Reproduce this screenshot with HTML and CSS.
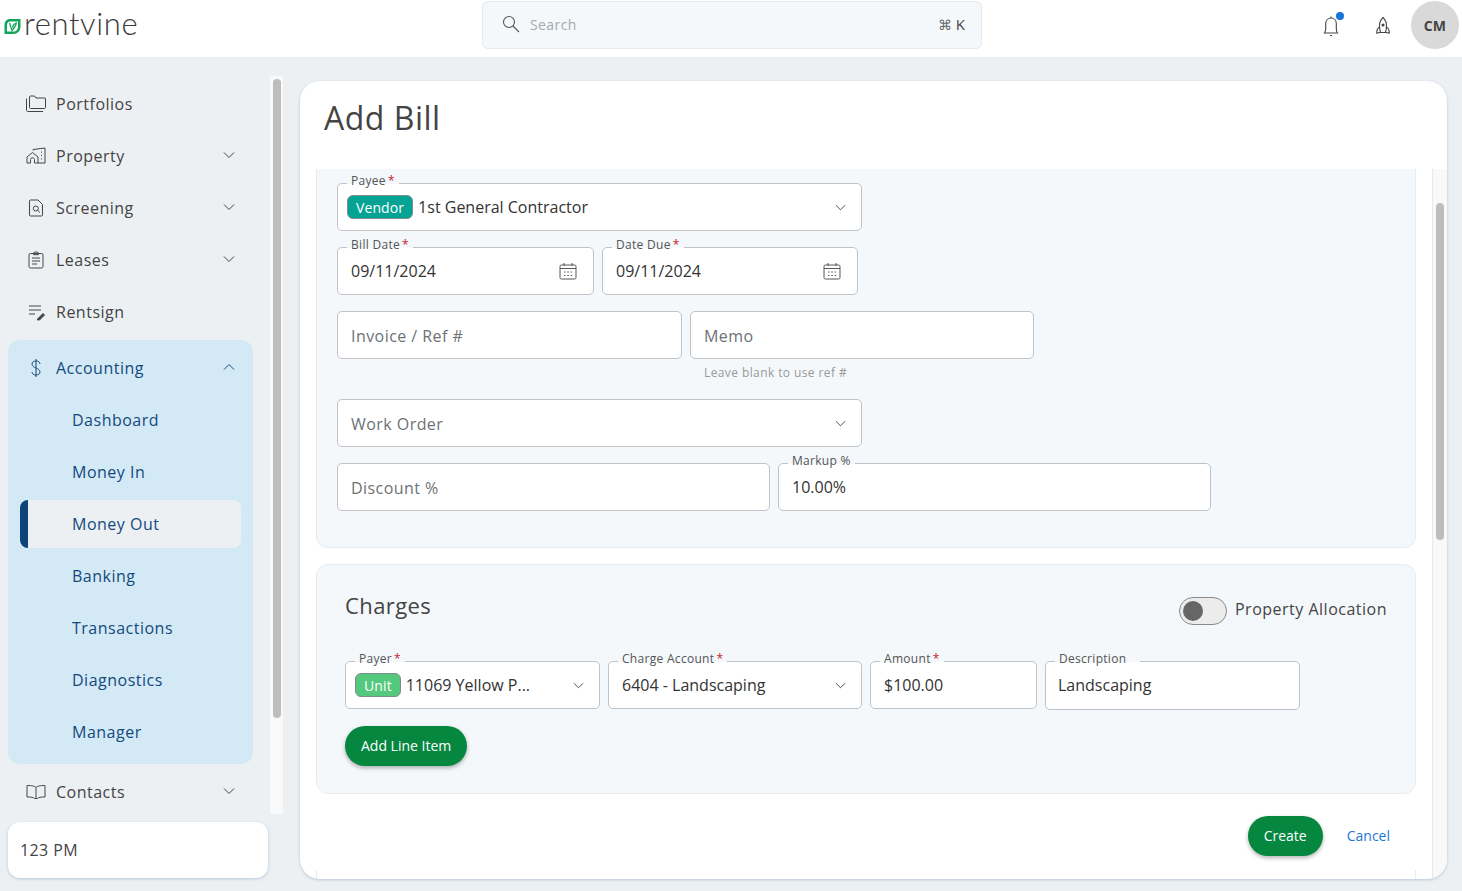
FILE: index.html
```html
<!DOCTYPE html>
<html lang="en">
<head>
  <meta charset="UTF-8" />
  <meta name="viewport" content="width=device-width, initial-scale=1.0"/>
  <title>Add Bill</title>
  <link rel="stylesheet" href="styles.css">
</head>
<body>
  <header class="topbar">
    <div class="logo">
      <svg class="logo-mark" viewBox="0 0 17 17" width="17" height="17">
        <path d="M6 1h10.500v7.500c0 4.500-3 7.500-7.500 7.500H.5V7C.5 3.500 2.500 1 6 1z" fill="#12a65c"/>
        <path d="M6.500 3.500h7.500v5c0 3-2 5-4.500 5H3V7.200c0-2.200 1.300-3.700 3.500-3.700z" fill="#fff"/>
        <path d="M5.500 5l2.500 7.500c2-2 4-4.500 4.300-7.500-2 .6-3.300 2-3.800 4.500" fill="none" stroke="#12a65c" stroke-width="1.300"/>
      </svg>
      <span class="logo-text">rentvine</span>
    </div>
    <div class="search">
      <svg class="search-icon" viewBox="0 0 18 18" width="18" height="18" fill="none" stroke="#555" stroke-width="1.100">
        <circle cx="7" cy="7" r="5.500"/><path d="M11 11l6 6"/>
      </svg>
      <span class="search-text">Search</span>
      <span class="search-key"><span class="cmd">⌘</span> K</span>
    </div>
    <div class="top-actions">
      <div class="bell">
        <svg viewBox="0 0 24 24" width="24" height="24" fill="none" stroke="#444" stroke-width="1.100">
          <path d="M5.500 19c1-1.200 1.200-2.500 1.200-4.500V9.500c0-3.200 2.300-5.500 5.300-5.500s5.300 2.300 5.300 5.500v5c0 2 .2 3.300 1.200 4.500z"/>
          <path d="M12 2.500V4M11 21.500h2"/>
        </svg>
        <span class="bell-dot"></span>
      </div>
      <svg class="rocket" viewBox="0 0 24 24" width="24" height="24" fill="none" stroke="#444" stroke-width="1.100">
        <path d="M12 3.500c2.500 2.500 3.500 5 3.500 8 0 2.500-.5 5-1 7h-5c-.5-2-1-4.500-1-7 0-3 1-5.500 3.500-8z"/>
        <path d="M8.700 13c-2 1-3 2.500-3 6l3.500-.5M15.300 13c2 1 3 2.500 3 6l-3.500-.5"/>
        <circle cx="12" cy="11" r="1" fill="#444"/>
      </svg>
      <div class="avatar">CM</div>
    </div>
  </header>

  <div class="layout">
    <aside class="sidebar">
      <div class="side-scroll">
        <nav class="nav">
          <a class="nav-item">
            <svg class="nav-icon" viewBox="0 0 20 20" width="20" height="20"><path d="M3.500 13.500V3c0-.6.400-1 1-1h4l1.500 2h9c.6 0 .5.400.5 1v8.500c0 .6-.4 1-1 1H4.500c-.6 0-1-.4-1-1z"/><path d="M.5 4.500v11.500c0 1 .5 1.500 1.500 1.500h15"/></svg>
            <span>Portfolios</span>
          </a>
          <a class="nav-item">
            <svg class="nav-icon" viewBox="0 0 20 20" width="20" height="20"><path d="M1 17v-6l5.500-4.500L12 11v6H8.500v-3.500c0-1-.8-1.800-2-1.800s-2 .8-2 1.800V17z"/><path d="M7 4.500V3.500l12-1.500v15h-7"/><path d="M15 6h1M15 9.500h1M15 13h1"/></svg>
            <span>Property</span>
            <svg class="chevron" viewBox="0 0 12 12" width="12" height="12"><path d="M1 3.500l5 5 5-5"/></svg>
          </a>
          <a class="nav-item">
            <svg class="nav-icon" viewBox="0 0 20 20" width="20" height="20"><path d="M3.500 17V3c0-.6.400-1 1-1h7.500l4.500 4.500V17c0 .6-.4 1-1 1h-11c-.6 0-1-.4-1-1z"/><circle cx="9.800" cy="10.500" r="2.500"/><path d="M11.700 12.300l2.300 2.300"/></svg>
            <span>Screening</span>
            <svg class="chevron" viewBox="0 0 12 12" width="12" height="12"><path d="M1 3.500l5 5 5-5"/></svg>
          </a>
          <a class="nav-item">
            <svg class="nav-icon" viewBox="0 0 20 20" width="20" height="20"><rect x="3" y="3.500" width="14" height="14.500" rx="1.500"/><path d="M7.500 3.500c0-1 .8-1.500 2.500-1.500s2.500.5 2.500 1.500v1.200h-5zM6 8h8M6 11h8M6 14h5"/></svg>
            <span>Leases</span>
            <svg class="chevron" viewBox="0 0 12 12" width="12" height="12"><path d="M1 3.500l5 5 5-5"/></svg>
          </a>
          <a class="nav-item">
            <svg class="nav-icon" viewBox="0 0 20 20" width="20" height="20"><path d="M3 4h12M3 8h12M3 12h6"/><path d="M12 16.500l5-5 1.500 1.500-5 5h-2z" fill="#444"/></svg>
            <span>Rentsign</span>
          </a>

          <div class="nav-group">
            <a class="nav-item">
              <svg class="nav-icon" viewBox="0 0 20 20" width="20" height="20"><path d="M14 6c0-1.800-1.600-3-4-3S6 4.200 6 6c0 4.500 8 3.500 8 8 0 1.800-1.600 3-4 3s-4-1.200-4-3M10 1v18"/></svg>
              <span>Accounting</span>
              <svg class="chevron" viewBox="0 0 12 12" width="12" height="12"><path d="M1 8.500l5-5 5 5"/></svg>
            </a>
            <a class="sub-item">Dashboard</a>
            <a class="sub-item">Money In</a>
            <a class="sub-item active">Money Out</a>
            <a class="sub-item">Banking</a>
            <a class="sub-item">Transactions</a>
            <a class="sub-item">Diagnostics</a>
            <a class="sub-item">Manager</a>
          </div>

          <a class="nav-item">
            <svg class="nav-icon" viewBox="0 0 20 20" width="20" height="20"><path d="M10 5.500C8.500 4 6 3.500 1 3.500v11.500c4 0 6.500.2 7.500 1.500h3c1-1.300 3.500-1.500 7.500-1.500V3.500c-5 0-7.500.5-9 2zM10 5.500v11"/></svg>
            <span>Contacts</span>
            <svg class="chevron" viewBox="0 0 12 12" width="12" height="12"><path d="M1 3.500l5 5 5-5"/></svg>
          </a>
        </nav>
        <div class="side-track"><div class="side-thumb"></div></div>
      </div>
      <div class="pm-card">123 PM</div>
    </aside>

    <main class="card">
      <h1 class="card-title">Add Bill</h1>
      <div class="card-body">
        <div class="content">
          <section class="panel panel-top">
            <div class="row">
              <div class="field w525">
                <label>Payee<i>*</i></label>
                <span class="pill vendor">Vendor</span>
                <span class="value">1st General Contractor</span>
                <svg class="chevron" viewBox="0 0 12 12" width="12" height="12"><path d="M1 3.500l5 5 5-5"/></svg>
              </div>
            </div>
            <div class="row">
              <div class="field date w257">
                <label>Bill Date<i>*</i></label>
                <span class="value">09/11/2024</span>
                <svg class="cal" viewBox="0 0 18 18" width="18" height="18"><rect x="1" y="3" width="16" height="14" rx="1.500"/><path d="M1 6.500h16M5 1v3M13 1v3"/><path class="dots" d="M5 10h1.500M8.300 10h1.500M11.600 10h1.500M5 13.500h1.500M8.300 13.500h1.500M11.600 13.500h1.500"/></svg>
              </div>
              <div class="field date w256">
                <label>Date Due<i>*</i></label>
                <span class="value">09/11/2024</span>
                <svg class="cal" viewBox="0 0 18 18" width="18" height="18"><rect x="1" y="3" width="16" height="14" rx="1.500"/><path d="M1 6.500h16M5 1v3M13 1v3"/><path class="dots" d="M5 10h1.500M8.300 10h1.500M11.600 10h1.500M5 13.500h1.500M8.300 13.500h1.500M11.600 13.500h1.500"/></svg>
              </div>
            </div>
            <div class="row">
              <div class="w345">
                <div class="field"><span class="placeholder">Invoice / Ref #</span></div>
              </div>
              <div class="w344">
                <div class="field"><span class="placeholder">Memo</span></div>
                <div class="helper">Leave blank to use ref #</div>
              </div>
            </div>
            <div class="row">
              <div class="field w525">
                <span class="placeholder">Work Order</span>
                <svg class="chevron" viewBox="0 0 12 12" width="12" height="12"><path d="M1 3.500l5 5 5-5"/></svg>
              </div>
            </div>
            <div class="row">
              <div class="field w433"><span class="placeholder">Discount %</span></div>
              <div class="field w433">
                <label>Markup %</label>
                <span class="value">10.00%</span>
              </div>
            </div>
          </section>

          <section class="panel charges">
            <div class="charges-head">
              <h2>Charges</h2>
              <div class="allocation">
                <span class="toggle"><span class="knob"></span></span>
                <span class="allocation-text">Property Allocation</span>
              </div>
            </div>
            <div class="row charge-row">
              <div class="field w255">
                <label>Payer<i>*</i></label>
                <span class="pill unit">Unit</span>
                <span class="value">11069 Yellow P...</span>
                <svg class="chevron" viewBox="0 0 12 12" width="12" height="12"><path d="M1 3.500l5 5 5-5"/></svg>
              </div>
              <div class="field w254">
                <label>Charge Account<i>*</i></label>
                <span class="value">6404 - Landscaping</span>
                <svg class="chevron" viewBox="0 0 12 12" width="12" height="12"><path d="M1 3.500l5 5 5-5"/></svg>
              </div>
              <div class="field w167">
                <label>Amount<i>*</i></label>
                <span class="value">$100.00</span>
              </div>
              <div class="field w255 desc">
                <label>Description</label>
                <span class="value">Landscaping</span>
              </div>
            </div>
            <button class="btn">Add Line Item</button>
          </section>

          <div class="actions">
            <button class="btn">Create</button>
            <a class="cancel">Cancel</a>
          </div>
          <div class="next-panel"></div>
        </div>
        <div class="main-track"><div class="main-thumb"></div></div>
      </div>
    </main>
  </div>
</body>
</html>
```

FILE: styles.css
```css
* {
  box-sizing: border-box;
}
body {
  margin: 0;
  height: 891px;
  overflow: hidden;
  background-color: #ecf0f3;
  font-family: "Open Sans", Arial, sans-serif;
  color: #333;
}

/* top bar */
.topbar {
  display: flex;
  align-items: center;
  height: 57px;
  padding: 0 3px 7px 4px;
  background: #fff;
}
.logo {
  display: flex;
  align-items: center;
  width: 478px;
  padding-bottom: 4px;
}
.logo-mark {
  flex: none;
  margin-top: 6px;
  margin-right: 3px;
}
.logo-text {
  font-family: Lato, Arial, sans-serif;
  font-weight: 300;
  font-size: 31px;
  line-height: 30px;
  letter-spacing: 0.6px;
  color: #3a3a3a;
}
.search {
  display: flex;
  align-items: center;
  width: 500px;
  height: 48px;
  padding: 0 16px 2px 19px;
  background: #f4f8fb;
  border: 1px solid #e6eaee;
  border-radius: 6px;
}
.search-icon {
  margin-right: 10px;
}
.search-text {
  font-size: 14px;
  letter-spacing: 0.4px;
  color: #a6aaae;
}
.search-key {
  margin-left: auto;
  font-size: 15px;
  color: #444;
}
.cmd {
  font-family: "DejaVu Sans", sans-serif;
  font-size: 14px;
  font-weight: 300;
  color: #666;
}
.top-actions {
  display: flex;
  align-items: center;
  margin-left: auto;
}
.bell {
  position: relative;
  width: 24px;
  height: 24px;
  margin-right: 28px;
  margin-top: 2px;
}
.bell-dot {
  position: absolute;
  top: -2px;
  right: -1px;
  width: 8px;
  height: 8px;
  border-radius: 50%;
  background: #1a73d8;
}
.rocket {
  margin-right: 16px;
  margin-top: 2px;
}
.avatar {
  display: flex;
  align-items: center;
  justify-content: center;
  width: 48px;
  height: 48px;
  border-radius: 50%;
  background: #d9d9d9;
  font-size: 14px;
  font-weight: 700;
  letter-spacing: 0.3px;
  color: #444;
}

.layout {
  display: flex;
  height: 834px;
}

/* sidebar */
.sidebar {
  flex: none;
  width: 300px;
  padding-top: 19px;
}
.side-scroll {
  display: flex;
  height: 738px;
  overflow: hidden;
}
.nav {
  flex: none;
  width: 245px;
  margin: 0 17px 0 8px;
  padding-top: 2px;
}
.nav-item {
  display: flex;
  align-items: center;
  height: 52px;
  padding: 0 18px;
  font-size: 16px;
  letter-spacing: 0.5px;
  color: #444;
}
.nav-icon {
  flex: none;
  width: 20px;
  height: 20px;
  margin-right: 10px;
  fill: none;
  stroke: #444;
  stroke-width: 1;
}
.chevron {
  flex: none;
  margin-left: auto;
  fill: none;
  stroke: #444;
  stroke-width: 1;
}
.nav-item .chevron {
  margin-top: -2px;
}
.nav-group {
  margin: 2px 0;
  padding: 2px 0 6px;
  background: #d3e9f6;
  border-radius: 12px;
}
.nav-group .nav-item {
  color: #134a7c;
}
.nav-group .nav-icon,
.nav-group .chevron {
  stroke: #134a7c;
}
.sub-item {
  display: flex;
  align-items: center;
  height: 52px;
  padding-left: 64px;
  font-size: 16px;
  letter-spacing: 0.5px;
  color: #134a7c;
}
.sub-item.active {
  height: 48px;
  margin: 2px 12px;
  padding-left: 44px;
  background: #ecf0f3;
  border-left: 8px solid #0c4478;
  border-radius: 8px;
}
.side-track {
  flex: none;
  width: 13px;
  padding: 3px 2px 0 3px;
  background: #f9f9f9;
}
.side-thumb {
  height: 639px;
  border-radius: 4px;
  background: #bdbdbd;
}
.pm-card {
  display: flex;
  align-items: center;
  width: 260px;
  height: 56px;
  margin: 8px 0 0 8px;
  padding-left: 12px;
  background: #fff;
  border-radius: 12px;
  box-shadow: 0 1px 3px rgba(110, 140, 175, 0.4);
  font-size: 16px;
  letter-spacing: 0.4px;
  color: #444;
}

/* main card */
.card {
  width: 1147px;
  height: 798px;
  margin-top: 24px;
  background: #fff;
  border-radius: 20px;
  box-shadow: 0 1px 3px rgba(110, 140, 175, 0.4);
  overflow: hidden;
}
.card-title {
  height: 88px;
  margin: 0;
  padding: 13px 0 0 24px;
  font-size: 32px;
  font-weight: 400;
  line-height: 48px;
  letter-spacing: 0.5px;
  color: #444;
}
.card-body {
  display: flex;
  height: 710px;
}
.content {
  flex: none;
  width: 1132px;
  padding: 0 16px;
}
.main-track {
  flex: none;
  width: 15px;
  padding: 34px 3px 0 3px;
  background: #f9f9f9;
  border-left: 1px solid #e6e9ec;
}
.main-thumb {
  height: 337px;
  border-radius: 4px;
  background: #bdbdbd;
}

.panel {
  background: #f4f8fb;
  border: 1px solid #e8ecef;
}
.panel-top {
  height: 379px;
  padding: 14px 20px 0;
  border-top: none;
  border-radius: 0 0 12px 12px;
}
.charges {
  height: 230px;
  margin-top: 16px;
  padding: 27px 28px 0;
  border-radius: 12px;
}
.charges-head {
  display: flex;
  align-items: flex-start;
  justify-content: space-between;
  height: 69px;
}
.charges-head h2 {
  margin: -1px 0 0;
  font-size: 22px;
  font-weight: 400;
  line-height: 28px;
  letter-spacing: 0.4px;
  color: #444;
}
.allocation {
  display: flex;
  align-items: center;
  gap: 8px;
  padding-top: 5px;
  font-size: 16px;
  letter-spacing: 0.5px;
  color: #444;
}
.allocation-text {
  margin-top: -5px;
}
.toggle {
  display: flex;
  align-items: center;
  width: 48px;
  height: 28px;
  padding-left: 3px;
  background: #ececec;
  border: 1px solid #8a8a8a;
  border-radius: 14px;
}
.knob {
  width: 20px;
  height: 20px;
  border-radius: 50%;
  background: #666;
}

/* form fields */
.row {
  display: flex;
  gap: 8px;
  margin-bottom: 16px;
}
.field {
  position: relative;
  display: flex;
  align-items: center;
  height: 48px;
  padding: 0 13px;
  background: #fff;
  border: 1px solid #bfc3c7;
  border-radius: 5px;
  font-size: 16px;
}
.field label {
  position: absolute;
  top: -11px;
  left: 9px;
  padding: 0 4px;
  background: linear-gradient(#f4f8fb 68%, #fff 68%);
  font-size: 12px;
  line-height: 16px;
  letter-spacing: 0.3px;
  color: #555;
}
.field label i {
  margin-left: 2px;
  font-style: normal;
  color: #c8202f;
}
.w525 { width: 525px; }
.w433 { width: 433px; }
.w345 { width: 345px; }
.w344 { width: 344px; }
.w257 { width: 257px; }
.w256 { width: 256px; }
.w255 { width: 255px; }
.w254 { width: 254px; }
.w167 { width: 167px; }
.w345 .field,
.w344 .field {
  width: 100%;
}
.value {
  color: #333;
}
.placeholder {
  padding-top: 2px;
  letter-spacing: 0.45px;
  color: #6e7276;
}
.helper {
  height: 24px;
  padding: 6px 0 0 14px;
  font-size: 12px;
  line-height: 16px;
  letter-spacing: 0.4px;
  color: #999;
}
.field:has(.pill) {
  padding-left: 9px;
}
.field > .chevron {
  margin-right: 2px;
  width: 11px;
  height: 11px;
}
.pill {
  display: flex;
  align-items: center;
  height: 24px;
  margin-right: 5px;
  padding: 0 8px;
  border: 1px solid #7d8d8c;
  border-radius: 6px;
  font-size: 14px;
  letter-spacing: 0.1px;
  color: #fff;
}
.vendor { background: #05a394; }
.unit { background: #54c87d; }
.cal {
  flex: none;
  margin-left: auto;
  margin-right: 3px;
  fill: none;
  stroke: #555;
  stroke-width: 1;
}
.charge-row {
  margin-bottom: 16px;
}
.desc {
  height: 49px;
  padding: 0 12px 1px;
}
.desc label {
  padding-right: 14px;
}

/* buttons */
.btn {
  height: 40px;
  padding: 0 16px 2px;
  background: #05873f;
  border: none;
  border-radius: 20px;
  box-shadow: 0 2px 4px rgba(0, 0, 0, 0.3);
  font-family: "Open Sans", Arial, sans-serif;
  font-size: 14px;
  color: #fff;
}
.actions {
  display: flex;
  justify-content: flex-end;
  align-items: center;
  gap: 24px;
  height: 76px;
  padding: 22px 26px 14px 0;
}
.cancel {
  margin-top: -2px;
  font-size: 14px;
  color: #1f77d6;
}
.next-panel {
  height: 9px;
  border-left: 1px solid #e8ecef;
  border-right: 1px solid #e8ecef;
}
```
